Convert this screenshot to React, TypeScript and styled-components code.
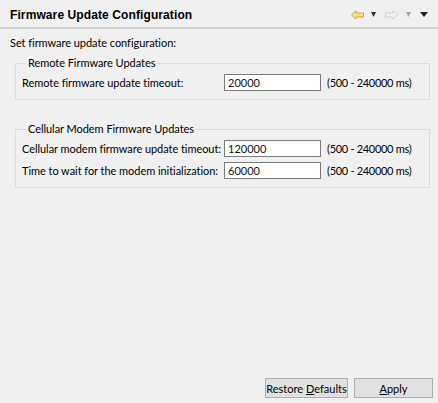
import React from "react";
import styled, { createGlobalStyle } from "styled-components";

const Global = createGlobalStyle`
  html, body { margin: 0; padding: 0; background: #f0f0f0; }
  body { font-family: Lato, "Open Sans", sans-serif; font-size: 11px; letter-spacing: -0.05px; color: #000; }
`;

const Page = styled.div`
  width: 438px;
  height: 403px;
  display: flex;
  flex-direction: column;
  background: #f0f0f0;
  box-sizing: border-box;
`;

const Header = styled.div`
  height: 29px;
  box-sizing: border-box;
  border-bottom: 2px solid #d2d2d2;
  display: flex;
  align-items: center;
  justify-content: space-between;
  padding: 2px 10px 0 10px;
`;

const Title = styled.div`
  font-family: "Liberation Sans", Arial, sans-serif;
  font-weight: bold;
  font-size: 12px;
  letter-spacing: 0.1px;
`;

const Tools = styled.div`
  display: flex;
  align-items: center;
`;

const Body = styled.div`
  flex: 1;
  display: flex;
  flex-direction: column;
  padding: 6px 8px 0 10px;
`;

const Intro = styled.div`
  line-height: 16px;
  white-space: nowrap;
`;

const Group = styled.fieldset<{ $top: number }>`
  margin: ${(p) => p.$top}px 0 0 5px;
  padding: 4px 6px 8px 6px;
  border: 1px solid #dcdcdc;
  display: flex;
  flex-direction: column;
  gap: 5px;
  min-width: 0;
`;

const Legend = styled.legend`
  padding: 0 1px;
  margin-left: 5px;
  line-height: 14px;
  white-space: nowrap;
`;

const Row = styled.div`
  display: flex;
  align-items: center;
  height: 17px;
  white-space: nowrap;
`;

const Label = styled.div`
  width: 202px;
  flex: none;
`;

const Input = styled.input`
  width: 97px;
  height: 17px;
  flex: none;
  box-sizing: border-box;
  border: 1px solid #7a7a7a;
  background: #fff;
  font: inherit;
  color: #111;
  padding: 0 3px;
  margin: 0;
  outline: none;
`;

const Range = styled.span`
  margin-left: 6px;
  letter-spacing: -0.3px;
`;

const Buttons = styled.div`
  display: flex;
  justify-content: flex-end;
  gap: 6px;
  padding: 0 5px 5px 0;
`;

const Button = styled.button<{ $w: number }>`
  width: ${(p) => p.$w}px;
  height: 20px;
  box-sizing: border-box;
  border: 1px solid #adadad;
  background: #e1e1e1;
  font: inherit;
  padding: 0;
  color: #000;
  white-space: nowrap;
`;

const Mnemonic = styled.span`
  text-decoration: underline;
`;

const Arrow = ({ color, stroke }: { color: string; stroke: string }) => (
  <svg width="13" height="10" viewBox="0 0 13 10">
    <path
      d="M0.5 5 L5 0.8 L5 3 L12.5 3 L12.5 7 L5 7 L5 9.2 Z"
      fill={color}
      stroke={stroke}
      strokeWidth="1"
      strokeLinejoin="round"
    />
  </svg>
);

const Tri = ({ color, w }: { color: string; w: number }) => (
  <svg width={w} height="5" viewBox={`0 0 ${w} 5`}>
    <path d={`M0 0 L${w} 0 L${w / 2} 5 Z`} fill={color} />
  </svg>
);

const ToolSlot = styled.span<{ $ml: number }>`
  display: inline-flex;
  margin-left: ${(p) => p.$ml}px;
`;

const Flip = styled.span`
  display: inline-flex;
  transform: scaleX(-1);
`;

export default function App() {
  return (
    <>
      <Global />
      <Page>
        <Header>
          <Title>Firmware Update Configuration</Title>
          <Tools>
            <ToolSlot $ml={0}>
              <Arrow color="#f7e08a" stroke="#c9a640" />
            </ToolSlot>
            <ToolSlot $ml={7}>
              <Tri color="#333" w={5} />
            </ToolSlot>
            <ToolSlot $ml={9}>
              <Flip>
                <Arrow color="#f4f4f4" stroke="#cfcfcf" />
              </Flip>
            </ToolSlot>
            <ToolSlot $ml={8}>
              <Tri color="#a0a0a0" w={5} />
            </ToolSlot>
            <ToolSlot $ml={9}>
              <Tri color="#222" w={8} />
            </ToolSlot>
          </Tools>
        </Header>
        <Body>
          <Intro>Set firmware update configuration:</Intro>
          <Group $top={5}>
            <Legend>Remote Firmware Updates</Legend>
            <Row>
              <Label>Remote firmware update timeout:</Label>
              <Input defaultValue="20000" />
              <Range>(500 - 240000 ms)</Range>
            </Row>
          </Group>
          <Group $top={22}>
            <Legend>Cellular Modem Firmware Updates</Legend>
            <Row>
              <Label>Cellular modem firmware update timeout:</Label>
              <Input defaultValue="120000" />
              <Range>(500 - 240000 ms)</Range>
            </Row>
            <Row>
              <Label>Time to wait for the modem initialization:</Label>
              <Input defaultValue="60000" />
              <Range>(500 - 240000 ms)</Range>
            </Row>
          </Group>
        </Body>
        <Buttons>
          <Button $w={83}>
            Restore <Mnemonic>D</Mnemonic>efaults
          </Button>
          <Button $w={79}>
            <Mnemonic>A</Mnemonic>pply
          </Button>
        </Buttons>
      </Page>
    </>
  );
}
